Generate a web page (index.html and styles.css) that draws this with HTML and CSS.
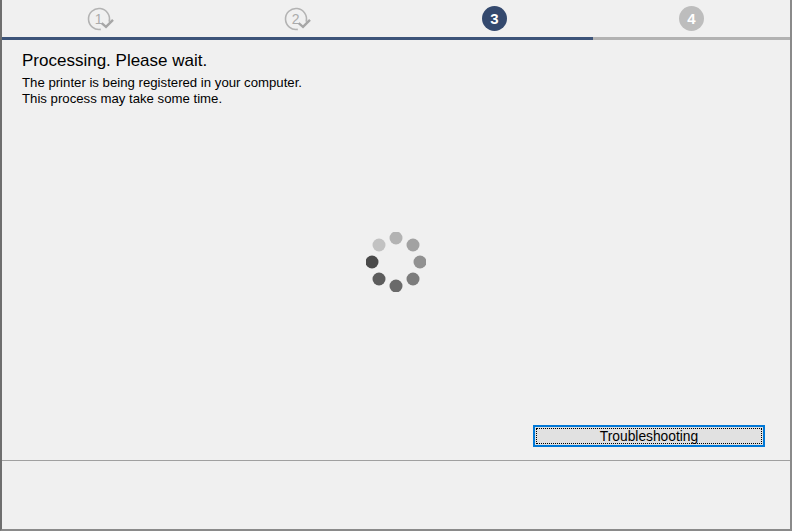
FILE: index.html
```html
<!DOCTYPE html>
<html lang="en">
<head>
    <meta charset="UTF-8">
    <title>Printer Setup</title>
    <link rel="stylesheet" href="styles.css">
</head>
<body>
    <div class="window">
        <!-- Step indicator -->
        <div class="steps">
            <div class="step">
                <svg width="30" height="26" viewBox="0 0 30 26">
                    <path d="M14.82 23.34 A10.5 10.5 0 1 1 23.14 15.72" fill="none" stroke="#b3b3b3" stroke-width="1.6"/>
                    <text x="12.6" y="17.6" text-anchor="middle" class="done-num">1</text>
                    <path d="M15.7 17.2 L20 20.8 L27 13.8" fill="none" stroke="#a6a6a6" stroke-width="2.4"/>
                </svg>
            </div>
            <div class="step">
                <svg width="30" height="26" viewBox="0 0 30 26">
                    <path d="M14.82 23.34 A10.5 10.5 0 1 1 23.14 15.72" fill="none" stroke="#b3b3b3" stroke-width="1.6"/>
                    <text x="12.6" y="17.6" text-anchor="middle" class="done-num">2</text>
                    <path d="M15.7 17.2 L20 20.8 L27 13.8" fill="none" stroke="#a6a6a6" stroke-width="2.4"/>
                </svg>
            </div>
            <div class="step">
                <span class="badge current">3</span>
            </div>
            <div class="step">
                <span class="badge todo">4</span>
            </div>
        </div>
        <div class="progress">
            <div class="progress-done"></div>
            <div class="progress-rest"></div>
        </div>

        <div class="content">
            <h1>Processing. Please wait.</h1>
            <p>The printer is being registered in your computer.<br>This process may take some time.</p>

            <div class="spinner-area">
                <svg width="60" height="60" viewBox="0 0 60 60">
                    <circle cx="30" cy="6" r="6.5" fill="#b3b3b3"/>
                    <circle cx="47" cy="13" r="6.5" fill="#a2a2a2"/>
                    <circle cx="54" cy="30" r="6.5" fill="#919191"/>
                    <circle cx="47" cy="47" r="6.5" fill="#7c7c7c"/>
                    <circle cx="30" cy="54" r="6.5" fill="#6a6a6a"/>
                    <circle cx="13" cy="47" r="6.5" fill="#5c5c5c"/>
                    <circle cx="6" cy="30" r="6.5" fill="#4a4a4a"/>
                    <circle cx="13" cy="13" r="6.5" fill="#c2c2c2"/>
                </svg>
            </div>

            <div class="actions">
                <button class="btn">Troubleshooting</button>
            </div>
        </div>

        <div class="footer"></div>
    </div>
</body>
</html>
```

FILE: styles.css
```css
html, body {
    margin: 0;
    padding: 0;
}

body {
    font-family: "Liberation Sans", Arial, sans-serif;
    background-color: #f0f0f0;
    color: #000;
}

.window {
    width: 792px;
    height: 531px;
    box-sizing: border-box;
    border-left: 2px solid #6e6e6e;
    border-right: 2px solid #8a8a8a;
    border-bottom: 2px solid #8a8a8a;
    display: flex;
    flex-direction: column;
}

.steps {
    height: 37px;
    display: grid;
    grid-template-columns: repeat(4, 1fr);
}

.step {
    display: flex;
    align-items: center;
    justify-content: center;
}

.done-num {
    font-family: "Liberation Sans", Arial, sans-serif;
    font-size: 14px;
    fill: #ababab;
}

.badge {
    width: 25px;
    height: 25px;
    border-radius: 50%;
    color: white;
    font-weight: bold;
    font-size: 15px;
    display: flex;
    align-items: center;
    justify-content: center;
}

.badge.current {
    background-color: #34496e;
}

.badge.todo {
    background-color: #bdbdbd;
}

.progress {
    display: flex;
    height: 3px;
}

.progress-done {
    width: 591px;
    background-color: #3d5479;
}

.progress-rest {
    flex: 1;
    background-color: #b2b2b2;
}

.content {
    flex: 1;
    display: flex;
    flex-direction: column;
    padding: 11px 25px 13px 20px;
}

h1 {
    margin: 0;
    font-size: 17px;
    font-weight: normal;
    line-height: 20px;
}

.content p {
    margin: 4px 0 0;
    font-size: 13.2px;
    line-height: 16px;
}

.spinner-area {
    flex: 1;
    display: flex;
    align-items: center;
    justify-content: center;
    padding: 0 0 8px 4px;
}

.actions {
    display: flex;
    justify-content: flex-end;
}

.btn {
    width: 232px;
    height: 22px;
    box-sizing: border-box;
    background-color: #e1e1e1;
    border: 2px solid #0078d7;
    outline: 1px dotted #000;
    outline-offset: -4px;
    font-family: "Liberation Sans", Arial, sans-serif;
    font-size: 13.8px;
    color: #000;
    padding: 0;
}

.footer {
    height: 68px;
    border-top: 1px solid #a0a0a0;
}
```
